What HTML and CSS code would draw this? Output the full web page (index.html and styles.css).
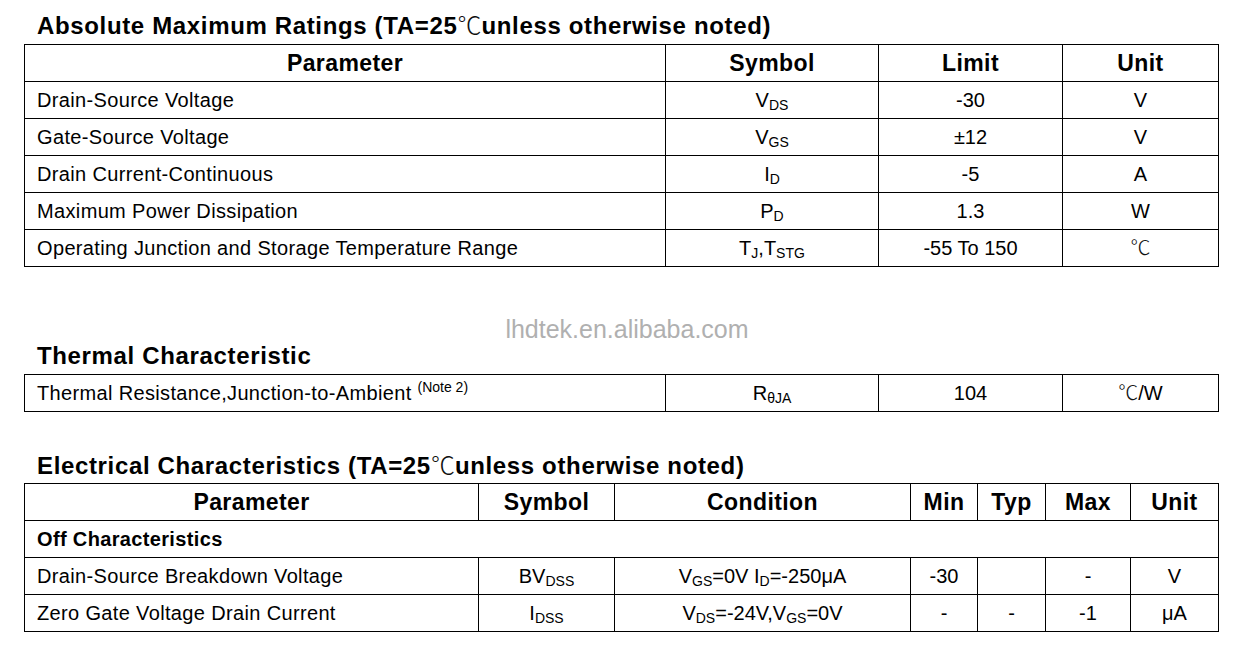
FILE: index.html
```html
<!DOCTYPE html>
<html>
<head>
<meta charset="utf-8">
<link rel="stylesheet" href="styles.css">
</head>
<body>
<div class="page">
  <h2 class="title t1">Absolute Maximum Ratings (TA=25<span class="deg">℃</span>unless otherwise noted)</h2>
  <table class="grid g4">
    <colgroup><col class="c-par"><col class="c-sym"><col class="c-lim"><col class="c-unit"></colgroup>
    <tr class="head"><th class="wide">Parameter</th><th>Symbol</th><th>Limit</th><th>Unit</th></tr>
    <tr><td class="par">Drain-Source Voltage</td><td class="n">V<sub>DS</sub></td><td class="n">-30</td><td class="n">V</td></tr>
    <tr><td class="par">Gate-Source Voltage</td><td class="n">V<sub>GS</sub></td><td class="n">±12</td><td class="n">V</td></tr>
    <tr><td class="par">Drain Current-Continuous</td><td class="n">I<sub>D</sub></td><td class="n">-5</td><td class="n">A</td></tr>
    <tr><td class="par">Maximum Power Dissipation</td><td class="n">P<sub>D</sub></td><td class="n">1.3</td><td class="n">W</td></tr>
    <tr><td class="par">Operating Junction and Storage Temperature Range</td><td class="n">T<sub>J</sub>,T<sub>STG</sub></td><td class="n">-55 To 150</td><td class="n"><span class="deg">℃</span></td></tr>
  </table>

  <div class="watermark">lhdtek.en.alibaba.com</div>

  <h2 class="title t2">Thermal Characteristic</h2>
  <table class="grid g4">
    <colgroup><col class="c-par"><col class="c-sym"><col class="c-lim"><col class="c-unit"></colgroup>
    <tr><td class="par">Thermal Resistance,Junction-to-Ambient <sup class="note">(Note 2)</sup></td><td class="n">R<sub>θJA</sub></td><td class="n">104</td><td class="n"><span class="deg">℃</span>/W</td></tr>
  </table>

  <h2 class="title t3">Electrical Characteristics (TA=25<span class="deg">℃</span>unless otherwise noted)</h2>
  <table class="grid g7">
    <colgroup><col class="e-par"><col class="e-sym"><col class="e-cond"><col class="e-min"><col class="e-typ"><col class="e-max"><col class="e-unit"></colgroup>
    <tr class="head"><th class="wide">Parameter</th><th>Symbol</th><th>Condition</th><th>Min</th><th>Typ</th><th>Max</th><th>Unit</th></tr>
    <tr><td class="par sub-head" colspan="7">Off Characteristics</td></tr>
    <tr><td class="par">Drain-Source Breakdown Voltage</td><td class="n">BV<sub>DSS</sub></td><td class="n">V<sub>GS</sub>=0V I<sub>D</sub>=-250μA</td><td class="n">-30</td><td class="n"></td><td class="n">-</td><td class="n">V</td></tr>
    <tr><td class="par">Zero Gate Voltage Drain Current</td><td class="n">I<sub>DSS</sub></td><td class="n">V<sub>DS</sub>=-24V,V<sub>GS</sub>=0V</td><td class="n">-</td><td class="n">-</td><td class="n">-1</td><td class="n">μA</td></tr>
  </table>
</div>
</body>
</html>
```

FILE: styles.css
```css
html, body {
  margin: 0;
  padding: 0;
  background: #fff;
}

.page {
  width: 1254px;
  padding-left: 24px;
  box-sizing: border-box;
  font-family: "Liberation Sans", Arial, sans-serif;
  color: #000;
}

.title {
  font-family: "Liberation Sans", Arial, sans-serif;
  font-weight: bold;
  font-size: 24px;
  letter-spacing: 0.65px;
  line-height: 26px;
  height: 26px;
  margin: 0;
  padding-left: 13px;
  white-space: nowrap;
}

.t1 { margin-top: 13px; margin-bottom: 5px; }
.t2 { margin-top: 2px; margin-bottom: 5px; }
.t3 { margin-top: 41px; margin-bottom: 4px; }

.deg {
  font-family: "Noto Sans CJK SC", sans-serif;
  font-weight: 300;
  line-height: 0;
  letter-spacing: 0;
  color: #111;
}

.grid {
  border-collapse: collapse;
  table-layout: fixed;
  width: 1194px;
}

.grid th,
.grid td {
  border: 1px solid #000;
  height: 36px;
  padding: 0;
  text-align: center;
  vertical-align: middle;
  white-space: nowrap;
}

.c-par { width: 641px; }
.c-sym { width: 213px; }
.c-lim { width: 184px; }
.c-unit { width: 156px; }

.e-par { width: 454px; }
.e-sym { width: 136px; }
.e-cond { width: 296px; }
.e-min { width: 67px; }
.e-typ { width: 68px; }
.e-max { width: 85px; }
.e-unit { width: 88px; }

.grid th {
  font-family: "Liberation Sans", Arial, sans-serif;
  font-weight: bold;
  font-size: 23px;
  letter-spacing: 0.4px;
}

.grid td.par {
  text-align: left;
  padding-left: 12px;
  font-size: 20px;
  letter-spacing: 0.35px;
}

.grid td.sub-head {
  font-weight: bold;
}

.grid td.n {
  font-family: "Liberation Sans", Arial, sans-serif;
  font-size: 20px;
}

.grid sub {
  font-size: 14px;
  vertical-align: -3px;
  line-height: 0;
}

.note {
  font-size: 14px;
  vertical-align: 8px;
  line-height: 0;
  letter-spacing: 0;
}

.watermark {
  margin-top: 50px;
  height: 24px;
  line-height: 24px;
  text-align: center;
  width: 1206px;
  font-family: "Liberation Sans", Arial, sans-serif;
  font-size: 25px;
  color: #b0b0b0;
}
```
